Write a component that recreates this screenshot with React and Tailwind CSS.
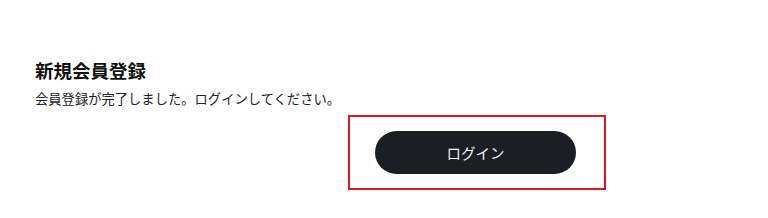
import React from 'react';

const App = () => (
    <div className="w-[768px] h-[218px] bg-white pt-[58px] pl-[35px]" style={{ fontFamily: '"Noto Sans CJK JP", sans-serif' }}>
        <h2 className="text-[18.5px] leading-[24px] font-bold text-[#111]">新規会員登録</h2>
        <p className="mt-[8px] text-[13.3px] leading-[18px] text-[#222]">会員登録が完了しました。ログインしてください。</p>
        <div className="ml-[313px] mt-[7px] w-[258px] h-[75px] border-2 border-[#e3161b] flex items-center pl-[25px]">
            <button className="w-[201px] h-[43px] rounded-full bg-[#1b1f24] text-[#f2f2f2] text-[14.5px]">
                ログイン
            </button>
        </div>
    </div>
);

export default App;
